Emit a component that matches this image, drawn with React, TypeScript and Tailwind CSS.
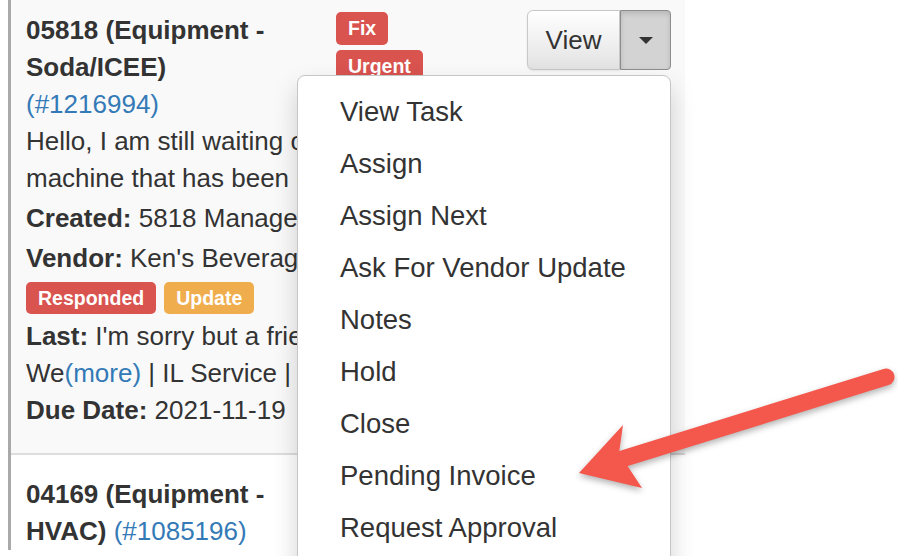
import React from 'react'

const menuItems = [
  'View Task',
  'Assign',
  'Assign Next',
  'Ask For Vendor Update',
  'Notes',
  'Hold',
  'Close',
  'Pending Invoice',
  'Request Approval',
]

function Badge({ color, children }: { color: string; children: React.ReactNode }) {
  return (
    <span
      className={`inline-block h-[33px] rounded-[5px] px-[12px] text-[19.5px] font-bold leading-[33px] text-white ${color}`}
    >
      {children}
    </span>
  )
}

function Arrow() {
  return (
    <svg
      className="pointer-events-none absolute left-0 top-0"
      width="898"
      height="556"
      viewBox="0 0 898 556"
      style={{ filter: 'drop-shadow(0 3px 3px rgba(0,0,0,0.3))' }}
    >
      <line x1="886" y1="377" x2="622" y2="459" stroke="#f4574b" strokeWidth="17" strokeLinecap="round" />
      <polygon points="579,473 623,425 619,453 642,488" fill="#f4574b" />
    </svg>
  )
}

export default function App() {
  return (
    <div className="relative h-[556px] w-[898px] overflow-hidden bg-white font-['Liberation_Sans',Arial,sans-serif] text-[#333]">
      <div className="ml-[8px] w-[677px] border-l-[3px] border-[#a9a9a9]">
        {/* first task row */}
        <div className="flex border-b-2 border-[#dddddd] bg-[#f9f9f9] pb-[24px] pl-[15px] pr-[14px] pt-[12px]">
          <div className="w-[310px] shrink-0 overflow-hidden whitespace-nowrap text-[26px] leading-[37px]">
            <div className="font-bold">05818 (Equipment -</div>
            <div className="font-bold">Soda/ICEE)</div>
            <div className="text-[#337ab7]">(#1216994)</div>
            <div>Hello, I am still waiting on the new</div>
            <div>machine that has been ordered</div>
            <div className="mt-[3px]">
              <b>Created:</b> 5818 Manager
            </div>
            <div className="mt-[3px]">
              <b>Vendor:</b> Ken's Beverage
            </div>
            <div className="mt-[4.5px] flex h-[32px] gap-[8px]">
              <span className="inline-block h-[32px] rounded-[5px] bg-[#d9534f] px-[12px] text-[19.5px] font-bold leading-[32px] text-white">
                Responded
              </span>
              <span className="inline-block h-[32px] rounded-[5px] bg-[#f0ad4e] px-[12px] text-[19.5px] font-bold leading-[32px] text-white">
                Update
              </span>
            </div>
            <div className="mt-[4.5px]">
              <b>Last:</b> I'm sorry but a friend
            </div>
            <div>
              We<span className="text-[#337ab7]">(more)</span> | IL Service | Tech
            </div>
            <div>
              <b>Due Date:</b> 2021-11-19
            </div>
          </div>
          <div className="flex flex-col items-start gap-[5px]">
            <Badge color="bg-[#d9534f]">Fix</Badge>
            <Badge color="bg-[#d9534f]">Urgent</Badge>
          </div>
          <div className="ml-auto -mt-[2px] flex h-[60px] self-start">
            <div className="flex w-[93px] items-center justify-center rounded-l-[6px] border border-[#c8c8c8] bg-[linear-gradient(to_bottom,#ffffff,#e2e2e2)] text-[26px] shadow-[0_1px_2px_rgba(0,0,0,0.08)]">
              View
            </div>
            <div className="flex w-[51px] items-center justify-center rounded-r-[4px] border border-[#8c8c8c] bg-[#d3d3d3] shadow-[inset_0_3px_5px_rgba(0,0,0,0.125)]">
              <div className="h-0 w-0 border-l-[7px] border-r-[7px] border-t-[7px] border-l-transparent border-r-transparent border-t-[#333]" />
            </div>
          </div>
        </div>

        {/* second task row */}
        <div className="bg-white pl-[15px] pt-[21px] text-[26px] leading-[37px]">
          <div className="font-bold">04169 (Equipment -</div>
          <div>
            <b>HVAC)</b> <span className="text-[#337ab7]">(#1085196)</span>
          </div>
        </div>
      </div>

      {/* open dropdown menu */}
      <div className="absolute left-[297px] top-[75px] h-[520px] w-[374px] rounded-[8px] border border-[#c6c6c6] bg-white pt-[10px] shadow-[0_12px_24px_rgba(0,0,0,0.175)]">
        {menuItems.map((item) => (
          <div key={item} className="h-[52px] whitespace-nowrap pl-[42px] text-[27.5px] leading-[52px] text-[#333]">
            {item}
          </div>
        ))}
      </div>

      <Arrow />
    </div>
  )
}
